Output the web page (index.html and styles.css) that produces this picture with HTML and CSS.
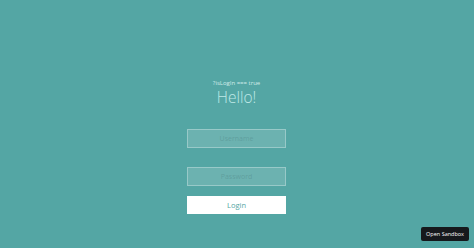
FILE: index.html
```html
<!DOCTYPE html>
<html>
<head>
<meta charset="utf-8">
<link rel="stylesheet" href="styles.css">
</head>
<body>
<main class="page">
  <div class="form">
    <p class="state">?isLogIn === true</p>
    <h1 class="title">Hello!</h1>
    <input class="field field-user" type="text" placeholder="Username">
    <input class="field field-pass" type="password" placeholder="Password">
    <button class="login">Login</button>
  </div>
  <div class="sandbox">Open Sandbox</div>
</main>
</body>
</html>
```
FILE: styles.css
```css
html, body {
  margin: 0;
  padding: 0;
  height: 100%;
}
body {
  background: #54a6a4;
  font-family: "Open Sans", "Liberation Sans", sans-serif;
  overflow: hidden;
}
.page {
  position: relative;
  height: 248px;
  display: flex;
  justify-content: center;
  padding-right: 1px;
}
.form {
  display: flex;
  flex-direction: column;
  align-items: center;
  padding-top: 79px;
  width: 99px;
}
.state {
  margin: 0;
  font-size: 6px;
  line-height: 8px;
  color: #d2ecea;
  white-space: nowrap;
}
.title {
  margin: 0;
  font-weight: 300;
  font-size: 15.5px;
  line-height: 20px;
  color: #bfe9e7;
  white-space: nowrap;
}
.field {
  box-sizing: border-box;
  width: 99px;
  height: 19px;
  padding: 0;
  border: 1px solid rgba(255, 255, 255, 0.3);
  background: rgba(255, 255, 255, 0.14);
  text-align: center;
  font-family: inherit;
  font-size: 7px;
  color: #fff;
  outline: none;
}
.field::placeholder {
  color: rgba(90, 150, 150, 0.7);
}
.field-user {
  margin-top: 22px;
}
.field-pass {
  margin-top: 19px;
}
.login {
  box-sizing: border-box;
  margin-top: 10px;
  width: 99px;
  height: 18px;
  border: none;
  background: #fff;
  color: #54a6a4;
  font-family: inherit;
  font-size: 7.5px;
  padding: 0;
}
.sandbox {
  position: absolute;
  right: 5px;
  bottom: 7px;
  background: #16191c;
  color: #fff;
  font-size: 5.5px;
  line-height: 14px;
  padding: 0 5px;
  border-radius: 2px;
}
```
